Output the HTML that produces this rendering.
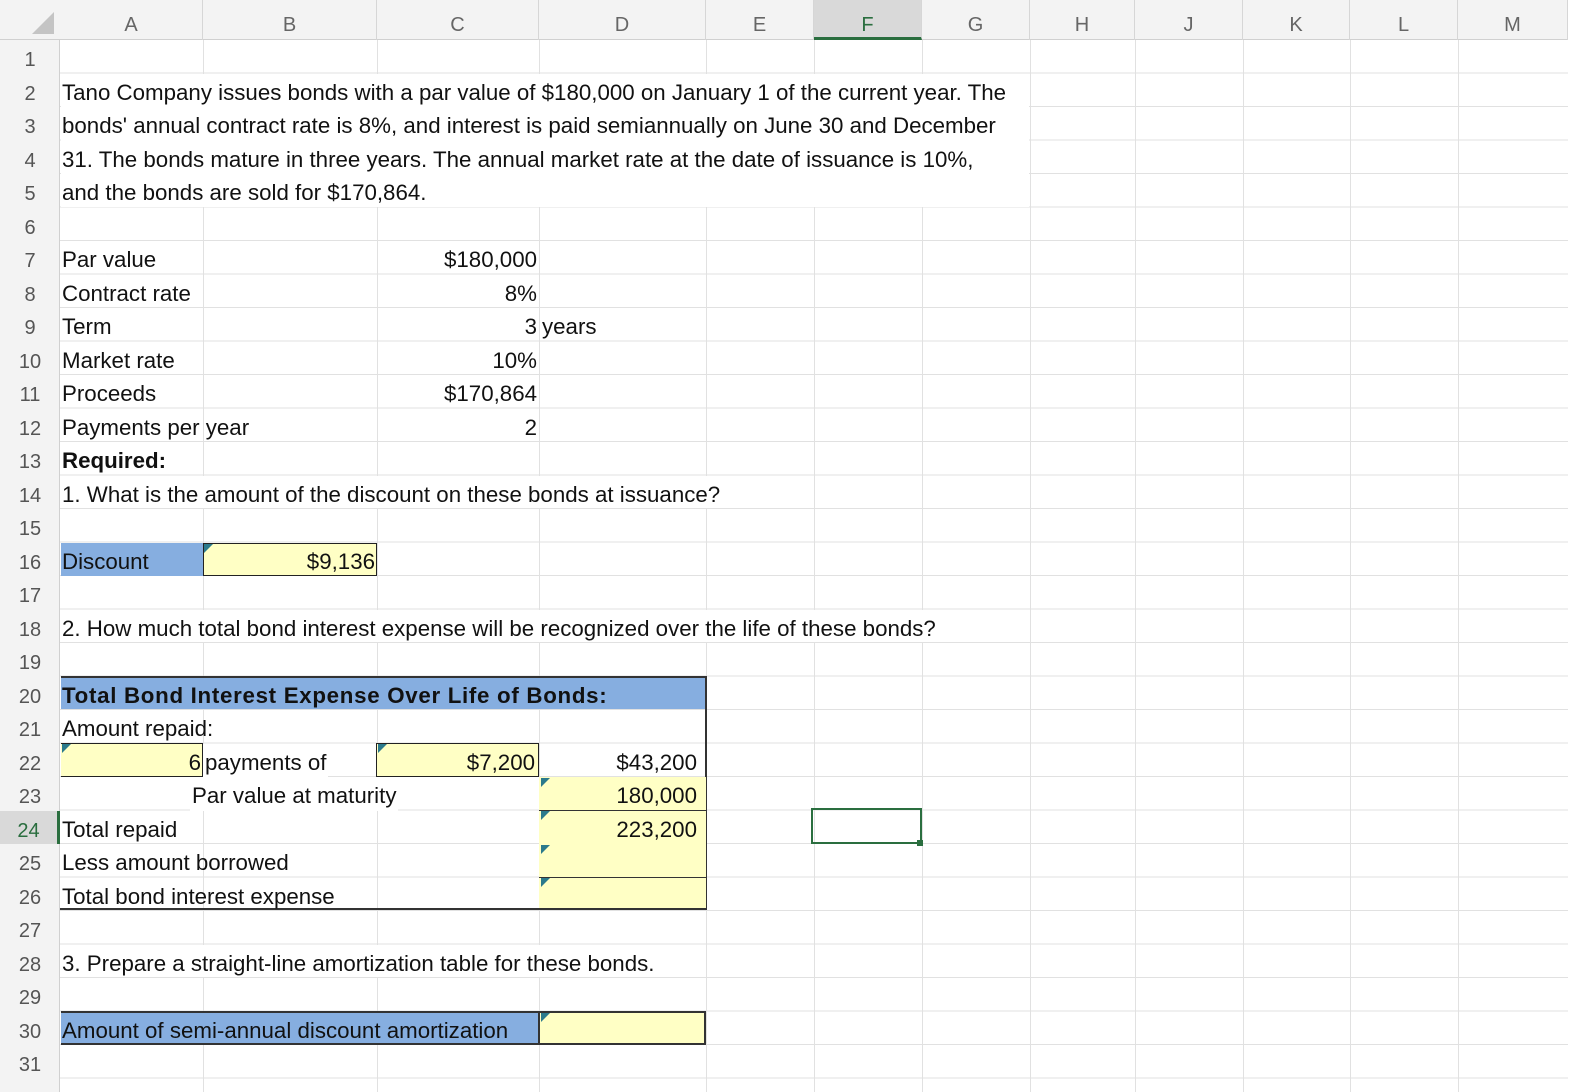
<!DOCTYPE html>
<html><head><style>
body{margin:0;width:1592px;height:1092px;overflow:hidden;background:#fff;font-family:"Liberation Sans",sans-serif;position:relative}
.a{position:absolute;box-sizing:border-box}
.hdr{background:#f3f3f3}
.ch{position:absolute;top:0;height:40px;line-height:50px;text-align:center;color:#666;font-size:20px;border-right:1px solid #d6d6d6;box-sizing:border-box}
.rh{position:absolute;left:0;width:60px;text-align:center;color:#555;font-size:20px;height:33.5px;line-height:40px}
.vl{position:absolute;top:40px;width:1px;height:1052px;background:#e1e1e1}
.t{position:absolute;font-size:22.3px;color:#111;white-space:nowrap;height:33.5px;line-height:38px;padding:0 2px;box-sizing:border-box}
.r{text-align:right}
.y{background:#ffffc5}
.b{background:#86aee0}
.tri{position:absolute;width:0;height:0;border-top:9px solid #2b7a8c;border-right:9px solid transparent}
</style></head><body>
<div class="a" style="left:60px;top:40px;width:1532px;height:1052px;background:repeating-linear-gradient(to bottom,transparent 0,transparent 32.5px,#e1e1e1 32.5px,#e1e1e1 33.5px)"></div>
<div class="vl" style="left:203px"></div><div class="vl" style="left:377px"></div><div class="vl" style="left:539px"></div><div class="vl" style="left:706px"></div><div class="vl" style="left:814px"></div><div class="vl" style="left:922px"></div><div class="vl" style="left:1030px"></div><div class="vl" style="left:1135px"></div><div class="vl" style="left:1243px"></div><div class="vl" style="left:1350px"></div><div class="vl" style="left:1458px"></div><div class="vl" style="left:1568px"></div>
<div class="a hdr" style="left:0;top:0;width:1592px;height:40px;border-bottom:1px solid #d0d0d0"></div>
<div class="a hdr" style="left:0;top:40px;width:60px;height:1052px;border-right:1px solid #d0d0d0"></div>
<div class="a" style="left:32px;top:12px;width:0;height:0;border-left:22px solid transparent;border-bottom:22px solid #c4c4c4"></div>
<div class="ch" style="left:60px;width:143px">A</div>
<div class="ch" style="left:203px;width:174px">B</div>
<div class="ch" style="left:377px;width:162px">C</div>
<div class="ch" style="left:539px;width:167px">D</div>
<div class="ch" style="left:706px;width:108px">E</div>
<div class="ch" style="left:814px;width:108px;background:#d9d9d9;color:#2a6e3f;border-bottom:3px solid #2a6e3f;line-height:50px">F</div>
<div class="ch" style="left:922px;width:108px">G</div>
<div class="ch" style="left:1030px;width:105px">H</div>
<div class="ch" style="left:1135px;width:108px">J</div>
<div class="ch" style="left:1243px;width:107px">K</div>
<div class="ch" style="left:1350px;width:108px">L</div>
<div class="ch" style="left:1458px;width:110px">M</div>
<div class="rh" style="top:40px">1</div><div class="rh" style="top:73.5px">2</div><div class="rh" style="top:107px">3</div><div class="rh" style="top:140.5px">4</div><div class="rh" style="top:174px">5</div><div class="rh" style="top:207.5px">6</div><div class="rh" style="top:241px">7</div><div class="rh" style="top:274.5px">8</div><div class="rh" style="top:308px">9</div><div class="rh" style="top:341.5px">10</div><div class="rh" style="top:375px">11</div><div class="rh" style="top:408.5px">12</div><div class="rh" style="top:442px">13</div><div class="rh" style="top:475.5px">14</div><div class="rh" style="top:509px">15</div><div class="rh" style="top:542.5px">16</div><div class="rh" style="top:576px">17</div><div class="rh" style="top:609.5px">18</div><div class="rh" style="top:643px">19</div><div class="rh" style="top:676.5px">20</div><div class="rh" style="top:710px">21</div><div class="rh" style="top:743.5px">22</div><div class="rh" style="top:777px">23</div><div class="rh" style="top:810.5px;background:#d9d9d9;color:#2a6e3f;border-right:3px solid #2a6e3f;box-sizing:border-box">24</div><div class="rh" style="top:844px">25</div><div class="rh" style="top:877.5px">26</div><div class="rh" style="top:911px">27</div><div class="rh" style="top:944.5px">28</div><div class="rh" style="top:978px">29</div><div class="rh" style="top:1011.5px">30</div><div class="rh" style="top:1045px">31</div>
<div class="a" style="left:61px;top:74px;width:968px;height:133px;background:#fff"></div>
<div class="t" style="left:60px;top:73.5px">Tano Company issues bonds with a par value of $180,000 on January 1 of the current year. The</div>
<div class="t" style="left:60px;top:107px">bonds' annual contract rate is 8%, and interest is paid semiannually on June 30 and December</div>
<div class="t" style="left:60px;top:140.5px">31. The bonds mature in three years. The annual market rate at the date of issuance is 10%,</div>
<div class="t" style="left:60px;top:174px">and the bonds are sold for $170,864.</div>
<div class="t" style="left:60px;top:241px">Par value</div><div class="t r" style="left:377px;width:162px;top:241px">$180,000</div>
<div class="t" style="left:60px;top:274.5px">Contract rate</div><div class="t r" style="left:377px;width:162px;top:274.5px">8%</div>
<div class="t" style="left:60px;top:308px">Term</div><div class="t r" style="left:377px;width:162px;top:308px">3</div><div class="t" style="left:540px;top:308px">years</div>
<div class="t" style="left:60px;top:341.5px">Market rate</div><div class="t r" style="left:377px;width:162px;top:341.5px">10%</div>
<div class="t" style="left:60px;top:375px">Proceeds</div><div class="t r" style="left:377px;width:162px;top:375px">$170,864</div>
<div class="t" style="left:60px;top:408.5px">Payments per year</div><div class="t r" style="left:377px;width:162px;top:408.5px">2</div>
<div class="t" style="left:60px;top:442px;font-weight:bold">Required:</div>
<div class="t" style="left:60px;top:476px;height:32px;background:#fff">1. What is the amount of the discount on these bonds at issuance?</div>
<div class="a b" style="left:61px;top:542.5px;width:142px;height:33px"></div>
<div class="a y" style="left:203px;top:542.5px;width:174px;height:33px;border:1px solid #222"></div>
<div class="tri" style="left:204px;top:543.5px"></div>
<div class="t" style="left:60px;top:542.5px">Discount</div>
<div class="t r" style="left:203px;width:174px;top:542.5px">$9,136</div>
<div class="t" style="left:60px;top:610px;height:32px;background:#fff">2. How much total bond interest expense will be recognized over the life of these bonds?</div>
<div class="a b" style="left:61px;top:676px;width:645px;height:33px;border-top:2px solid #333"></div>
<div class="a" style="left:705px;top:676px;width:2px;height:234px;background:#333"></div>
<div class="t" style="left:60px;top:676.5px;font-weight:bold;font-size:22.3px;letter-spacing:0.7px">Total Bond Interest Expense Over Life of Bonds:</div>
<div class="t" style="left:60px;top:710px">Amount repaid:</div>
<div class="a y" style="left:61px;top:742.5px;width:142px;height:34px;border:1px solid #222;border-left:none"></div>
<div class="tri" style="left:62px;top:744px"></div>
<div class="t r" style="left:60px;width:143px;top:743.5px">6</div>
<div class="t" style="left:203px;top:743.5px;background:#fff">payments of</div>
<div class="a y" style="left:376px;top:742.5px;width:163px;height:34px;border:1px solid #222"></div>
<div class="tri" style="left:378px;top:744px"></div>
<div class="t r" style="left:377px;width:160px;top:743.5px">$7,200</div>
<div class="t r" style="left:539px;width:160px;top:743.5px">$43,200</div>
<div class="a y" style="left:539px;top:776.5px;width:167px;height:132px"></div>
<div class="a" style="left:539px;top:809.5px;width:167px;height:1px;background:#333"></div>
<div class="a" style="left:539px;top:876.5px;width:167px;height:1px;background:#333"></div>
<div class="a" style="left:60px;top:907.5px;width:646px;height:2px;background:#333"></div>
<div class="tri" style="left:541px;top:778px"></div><div class="tri" style="left:541px;top:811px"></div><div class="tri" style="left:541px;top:845px"></div><div class="tri" style="left:541px;top:878px"></div>
<div class="t" style="left:190px;top:777px;background:#fff">Par value at maturity</div>
<div class="t r" style="left:539px;width:160px;top:777px">180,000</div>
<div class="t" style="left:60px;top:810.5px">Total repaid</div><div class="t r" style="left:539px;width:160px;top:810.5px">223,200</div>
<div class="t" style="left:60px;top:844px">Less amount borrowed</div>
<div class="t" style="left:60px;top:877.5px">Total bond interest expense</div>
<div class="a" style="left:811px;top:808px;width:111px;height:36px;border:2px solid #2a6e3f"></div>
<div class="a" style="left:917px;top:840px;width:6px;height:6px;background:#2a6e3f"></div>
<div class="t" style="left:60px;top:945px;height:32px;background:#fff">3. Prepare a straight-line amortization table for these bonds.</div>
<div class="a b" style="left:61px;top:1010.5px;width:478px;height:34px;border-top:2px solid #333;border-bottom:2px solid #333"></div>
<div class="a y" style="left:538px;top:1010.5px;width:168px;height:34px;border:2px solid #333"></div>
<div class="tri" style="left:541px;top:1013px"></div>
<div class="t" style="left:60px;top:1011.5px">Amount of semi-annual discount amortization</div>
<div class="a" style="left:1568px;top:0;width:24px;height:1092px;background:#fff"></div>
</body></html>
